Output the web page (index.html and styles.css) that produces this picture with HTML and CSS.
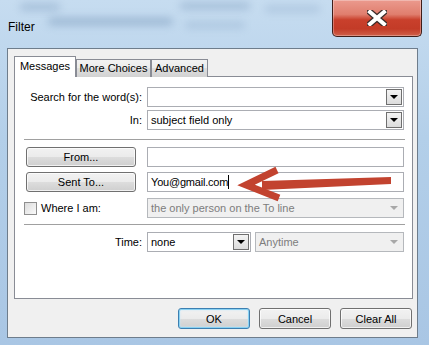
FILE: index.html
```html
<!doctype html>
<html>
<head>
	<meta charset="utf-8">
	<title>Filter</title>
	<link rel="stylesheet" href="styles.css">
</head>
<body>
	<div class='window'>
		<div class='glass'>
			<span class='smudge s1'></span>
			<span class='smudge s2'></span>
			<span class='smudge s3'></span>
			<span class='smudge s4'></span>
			<span class='smudge s5'></span>
		</div>
		<div class='titlebar'>
			<span class='title'>Filter</span>
			<div class='close'>
				<svg width="20" height="16" viewBox="0 0 20 16">
					<path d="M3,2 L17,14 M17,2 L3,14" stroke="#3a2a28" stroke-width="6.5" stroke-linecap="square"/>
					<path d="M3,2 L17,14 M17,2 L3,14" stroke="#fff" stroke-width="4" stroke-linecap="square"/>
				</svg>
			</div>
		</div>
		<div class='client'>
			<ul class='tabs'>
				<li class='active'>Messages</li>
				<li class='t2'>More Choices</li>
				<li class='t3'>Advanced</li>
			</ul>
			<div class='panel'>
				<div class='row r1'>
					<label class='lbl'>Search for the word(s):</label>
					<div class='combo wide'><span class='val'></span><span class='drop'></span></div>
				</div>
				<div class='row r2'>
					<label class='lbl'>In:</label>
					<div class='combo wide'><span class='val'>subject field only</span><span class='drop'></span></div>
				</div>
				<div class='sep'></div>
				<div class='row r3'>
					<div class='lbl'><input type="button" class='btn side' value="From..."></div>
					<div class='field wide'></div>
				</div>
				<div class='row r4'>
					<div class='lbl'><input type="button" class='btn side' value="Sent To..."></div>
					<div class='field wide'><span class='caret'>You@gmail.com</span></div>
				</div>
				<div class='row r5'>
					<label class='lbl left'><span class='check'></span>Where I am:</label>
					<div class='combo wide off'><span class='val'>the only person on the To line</span><span class='drop'></span></div>
				</div>
				<div class='sep s2'></div>
				<div class='row r6'>
					<label class='lbl'>Time:</label>
					<div class='combo narrow'><span class='val'>none</span><span class='drop'></span></div>
					<div class='combo rest off'><span class='val'>Anytime</span><span class='drop'></span></div>
				</div>
			</div>
			<div class='footer'>
				<input type="button" class='btn def' value="OK">
				<input type="button" class='btn' value="Cancel">
				<input type="button" class='btn' value="Clear All">
			</div>
		</div>
		<svg class='arrow' width="429" height="345" viewBox="0 0 429 345">
			<polygon points="391,177 391,184 262,190 262,181" fill="#c2432f"/>
			<polyline points="277,170 246,185 279,198" fill="none" stroke="#c2432f" stroke-width="7" stroke-linejoin="miter"/>
		</svg>
	</div>
</body>
</html>
```

FILE: styles.css
```css
*{margin: 0;padding: 0;list-style: none;box-sizing: border-box;}
body{width: 429px;height: 345px;overflow: hidden;font-family: "Liberation Sans", Arial, sans-serif;font-size: 11px;color: #000;}
.window{
	position: relative;width: 429px;height: 345px;overflow: hidden;
	background: linear-gradient(#c6dcf0, #b3cfe9 40%, #a9c6e4 100%);
	padding: 0 11px 7px 7px;
	display: flex;flex-direction: column;
}
.glass{position: absolute;left: 0;top: 0;width: 429px;height: 345px;overflow: hidden;}
.smudge{position: absolute;display: block;background: #6f8fb3;filter: blur(4px);opacity: .45;border-radius: 4px;}
.smudge.s1{left: 20px;top: 4px;width: 40px;height: 6px;}
.smudge.s2{left: 48px;top: 18px;width: 125px;height: 7px;opacity: .5;}
.smudge.s3{left: 180px;top: 3px;width: 70px;height: 6px;}
.smudge.s4{left: 185px;top: 22px;width: 60px;height: 6px;opacity: .3;}
.smudge.s5{left: 265px;top: 6px;width: 55px;height: 6px;opacity: .3;}
.titlebar{position: relative;height: 48px;display: flex;align-items: flex-start;margin-right: -11px;}
.title{margin-top: 20px;margin-left: 1px;font-size: 12px;}
.close{
	margin-left: auto;margin-right: 7px;width: 90px;height: 37px;
	border: 1px solid #3f1e1a;border-top: none;border-radius: 0 0 5px 5px;
	background: linear-gradient(#eb9a8e, #e07e6e 40%, #c9402c 55%, #c33b27 80%, #d0604a);
	box-shadow: inset 0 0 0 1px rgba(255,255,255,.3);
	display: flex;align-items: center;justify-content: center;
}
.close svg{margin-top: -1px;}
.client{
	position: relative;flex: 1;background: #f0f0f0;border: 1px solid #6e7d8c;
	padding: 7px 5px 0 6px;
}
.tabs{display: flex;align-items: flex-end;height: 21px;position: relative;z-index: 1;}
.tabs li{
	height: 18px;line-height: 17px;white-space: nowrap;text-align: center;
	border: 1px solid #898c95;border-bottom: none;margin-left: -1px;
	background: linear-gradient(#f2f2f2, #ebebeb 50%, #dedede 50%, #d2d2d2);
}
.tabs li.active{width: 62px;height: 21px;background: #fff;margin-left: 0;line-height: 19px;margin-right: 1px;}
.tabs li.t2{width: 75px;}
.tabs li.t3{width: 57px;margin-left: 0;}
.panel{
	width: 399px;height: 223px;margin-top: -1px;
	background: #fff;border: 1px solid #898c95;
	padding: 10px 7px 0 9px;
}
.row{display: flex;height: 20px;align-items: center;}
.r2{margin-top: 3px;}
.r3{margin-top: 7px;}
.r4{margin-top: 5px;}
.r5{margin-top: 6px;}
.r6{margin-top: 7px;}
.lbl{width: 123px;padding-right: 5px;white-space: nowrap;display: flex;justify-content: flex-end;align-items: center;}
.lbl.left{justify-content: flex-start;}
.sep{height: 1px;background: #a0a0a0;margin-top: 9px;}
.sep.s2{margin-top: 6px;}
.combo, .field{
	height: 20px;border: 1px solid #abadb3;background: #fff;
	display: flex;align-items: center;
}
.wide{width: 257px;}
.narrow{width: 104px;}
.rest{width: 149px;margin-left: 4px;}
.val{flex: 1;padding-left: 3px;white-space: nowrap;overflow: hidden;}
.drop{
	width: 16px;height: 16px;margin-right: 1px;border: 1px solid #6f6f6f;
	background: linear-gradient(#f4f4f4, #dcdcdc);
	display: flex;align-items: center;justify-content: center;
}
.drop::after{content: '';border: 4px solid transparent;border-top: 4px solid #000;border-bottom: none;}
.combo.off{background: #f0f0f0;border-color: #b5b8bc;color: #7d7d7d;}
.combo.off .drop{border-color: transparent;background: none;}
.combo.off .drop::after{border-top-color: #a8a8a8;}
.field{padding-left: 3px;}
.caret{border-right: 1px solid #000;line-height: 14px;letter-spacing: -0.2px;}
.check{width: 13px;height: 13px;border: 1px solid #8f8f8f;background: linear-gradient(135deg, #dcdcdc, #fafafa);margin-right: 4px;}
.btn{
	height: 21px;width: 72px;border: 1px solid #707070;border-radius: 3px;
	background: linear-gradient(#f2f2f2, #ebebeb 50%, #dddddd 50%, #cfcfcf);
	font-family: "Liberation Sans", Arial, sans-serif;font-size: 11px;color: #000;
	box-shadow: inset 0 0 0 1px rgba(255,255,255,.7);
}
.btn.side{width: 110px;height: 20px;margin-left: 2px;margin-right: auto;}
.btn.def{border-color: #3c7fb1;box-shadow: inset 0 0 0 1px #8ad2f3, inset 0 0 2px 1px #c4e8fa;}
.footer{display: flex;justify-content: flex-end;gap: 9px;margin-top: 9px;}
.arrow{position: absolute;left: 0;top: 0;pointer-events: none;}
```
